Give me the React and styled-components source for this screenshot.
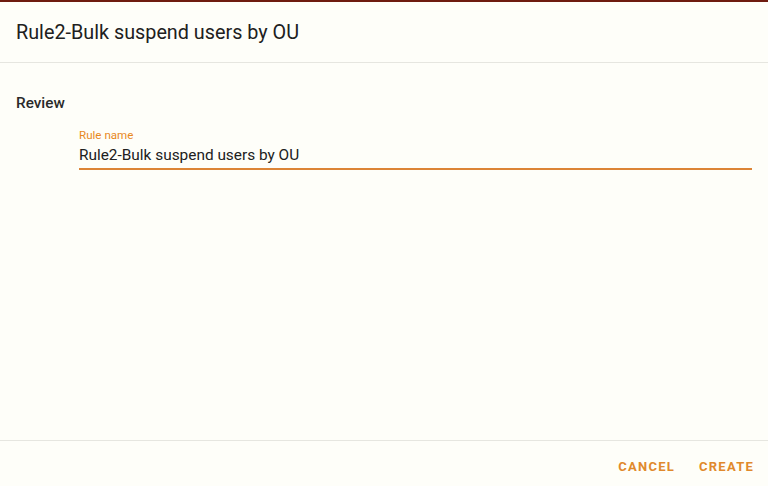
import React from "react";
import styled, { createGlobalStyle } from "styled-components";

const GlobalStyle = createGlobalStyle`
  html, body {
    margin: 0;
    padding: 0;
    background: #fefef9;
  }
  body {
    font-family: Roboto, "Noto Sans", "Liberation Sans", sans-serif;
    color: #212121;
  }
`;

const Page = styled.div`
  display: flex;
  flex-direction: column;
  height: 100vh;
  border-top: 2px solid #6e1b0f;
  box-sizing: border-box;
`;

const Header = styled.header`
  height: 60px;
  display: flex;
  align-items: center;
  padding: 0 16px;
  border-bottom: 1px solid #e6e6e0;
`;

const Title = styled.h1`
  margin: 0;
  font-size: 19.8px;
  font-weight: 400;
  color: #202020;
`;

const Content = styled.main`
  flex: 1;
  padding: 30px 16px 0 16px;
`;

const Section = styled.div`
  font-size: 15.3px;
  font-weight: 500;
  line-height: 20px;
  color: #2a2a2a;
`;

const Field = styled.div`
  margin: 15px 0 0 63px;
  display: flex;
  flex-direction: column;
`;

const Label = styled.label`
  font-size: 11.6px;
  line-height: 14px;
  color: #e8891f;
`;

const Input = styled.input`
  font-family: inherit;
  font-size: 15.4px;
  line-height: 20px;
  height: 23px;
  padding: 1px 0 2px 0;
  border: none;
  border-bottom: 2px solid #dc8436;
  background: transparent;
  color: #202020;
  outline: none;
`;

const Footer = styled.footer`
  height: 46px;
  display: flex;
  align-items: center;
  justify-content: flex-end;
  gap: 8px;
  padding: 5px 6px 0 6px;
  box-sizing: border-box;
  border-top: 1px solid #e6e6e0;
`;

const Button = styled.button`
  font-family: inherit;
  font-size: 13px;
  font-weight: 700;
  letter-spacing: 1.25px;
  color: #e0892c;
  background: none;
  border: none;
  padding: 8px 8px;
  cursor: pointer;
`;

export default function App() {
  return (
    <>
      <GlobalStyle />
      <Page>
        <Header>
          <Title>Rule2-Bulk suspend users by OU</Title>
        </Header>
        <Content>
          <Section>Review</Section>
          <Field>
            <Label>Rule name</Label>
            <Input defaultValue="Rule2-Bulk suspend users by OU" />
          </Field>
        </Content>
        <Footer>
          <Button>CANCEL</Button>
          <Button>CREATE</Button>
        </Footer>
      </Page>
    </>
  );
}
